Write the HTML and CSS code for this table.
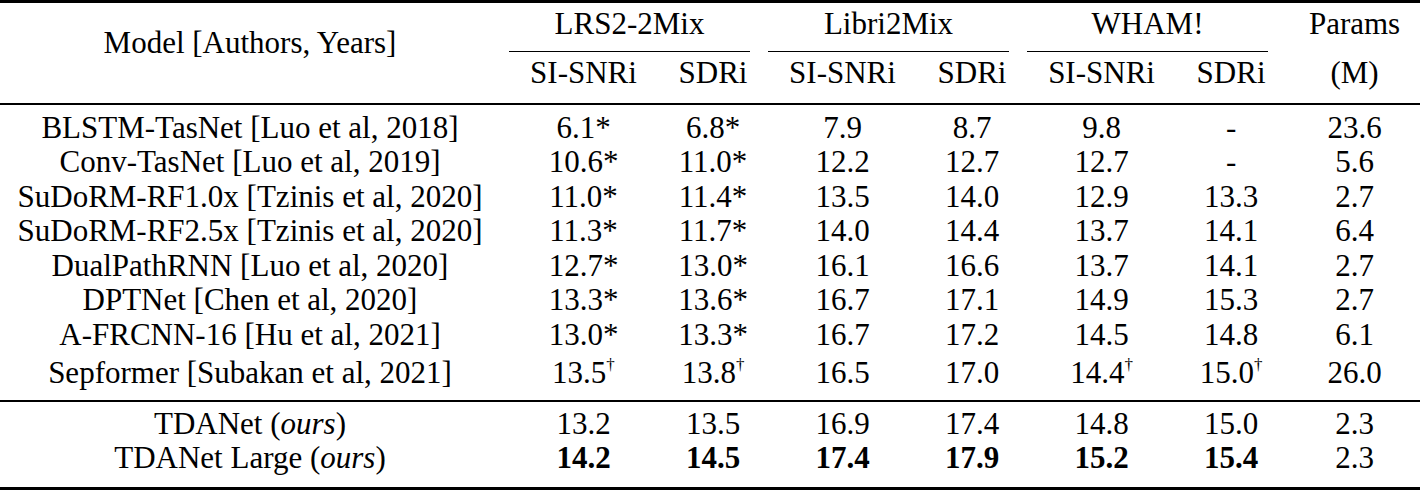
FILE: index.html
```html
<!DOCTYPE html>
<html>
<head>
	<title>Separation results</title>
	<link rel="stylesheet" href="styles.css">
</head>
<body>
	<table class="results">
		<colgroup>
			<col class="col-model">
			<col class="col-wide"><col class="col-narrow">
			<col class="col-wide"><col class="col-narrow">
			<col class="col-wide"><col class="col-narrow">
			<col class="col-params">
		</colgroup>
		<thead>
			<tr class="top">
				<th rowspan="2" class="model">Model [Authors, Years]</th>
				<th colspan="2" class="group"><div class="cmid">LRS2-2Mix</div></th>
				<th colspan="2" class="group"><div class="cmid">Libri2Mix</div></th>
				<th colspan="2" class="group"><div class="cmid">WHAM!</div></th>
				<th class="params">Params</th>
			</tr>
			<tr class="sub">
				<th>SI-SNRi</th>
				<th>SDRi</th>
				<th>SI-SNRi</th>
				<th>SDRi</th>
				<th>SI-SNRi</th>
				<th>SDRi</th>
				<th class="params">(M)</th>
			</tr>
		</thead>
		<tbody class="baselines">
			<tr>
				<td>BLSTM-TasNet [Luo et al, 2018]</td>
				<td>6.1*</td><td>6.8*</td><td>7.9</td><td>8.7</td><td>9.8</td><td>-</td><td class="params">23.6</td>
			</tr>
			<tr>
				<td>Conv-TasNet [Luo et al, 2019]</td>
				<td>10.6*</td><td>11.0*</td><td>12.2</td><td>12.7</td><td>12.7</td><td>-</td><td class="params">5.6</td>
			</tr>
			<tr>
				<td>SuDoRM-RF1.0x [Tzinis et al, 2020]</td>
				<td>11.0*</td><td>11.4*</td><td>13.5</td><td>14.0</td><td>12.9</td><td>13.3</td><td class="params">2.7</td>
			</tr>
			<tr>
				<td>SuDoRM-RF2.5x [Tzinis et al, 2020]</td>
				<td>11.3*</td><td>11.7*</td><td>14.0</td><td>14.4</td><td>13.7</td><td>14.1</td><td class="params">6.4</td>
			</tr>
			<tr>
				<td>DualPathRNN [Luo et al, 2020]</td>
				<td>12.7*</td><td>13.0*</td><td>16.1</td><td>16.6</td><td>13.7</td><td>14.1</td><td class="params">2.7</td>
			</tr>
			<tr>
				<td>DPTNet [Chen et al, 2020]</td>
				<td>13.3*</td><td>13.6*</td><td>16.7</td><td>17.1</td><td>14.9</td><td>15.3</td><td class="params">2.7</td>
			</tr>
			<tr>
				<td>A-FRCNN-16 [Hu et al, 2021]</td>
				<td>13.0*</td><td>13.3*</td><td>16.7</td><td>17.2</td><td>14.5</td><td>14.8</td><td class="params">6.1</td>
			</tr>
			<tr class="dagger">
				<td>Sepformer [Subakan et al, 2021]</td>
				<td>13.5<sup>&dagger;</sup></td><td>13.8<sup>&dagger;</sup></td><td>16.5</td><td>17.0</td><td>14.4<sup>&dagger;</sup></td><td>15.0<sup>&dagger;</sup></td><td class="params">26.0</td>
			</tr>
		</tbody>
		<tbody class="ours">
			<tr>
				<td>TDANet (<em>ours</em>)</td>
				<td>13.2</td><td>13.5</td><td>16.9</td><td>17.4</td><td>14.8</td><td>15.0</td><td class="params">2.3</td>
			</tr>
			<tr>
				<td>TDANet Large (<em>ours</em>)</td>
				<td><b>14.2</b></td><td><b>14.5</b></td><td><b>17.4</b></td><td><b>17.9</b></td><td><b>15.2</b></td><td><b>15.4</b></td><td class="params">2.3</td>
			</tr>
		</tbody>
	</table>
</body>
</html>
```

FILE: styles.css
```css
body {
	margin: 0;
	background: #fff;
	font-family: "Liberation Serif", serif;
}
.results {
	width: 1420px;
	table-layout: fixed;
	border-collapse: separate;
	border-spacing: 0;
	border-top: 3px solid #000;
	border-bottom: 3px solid #000;
	font-family: "Liberation Serif", serif;
	font-size: 31px;
	color: #000;
}
.col-model {
	width: 500px;
}
.col-wide {
	width: 167px;
}
.col-narrow {
	width: 92px;
}
.col-params {
	width: 143px;
}
.results th,
.results td {
	padding: 0;
	text-align: center;
	font-weight: normal;
	white-space: nowrap;
	font-family: "Liberation Serif", serif;
}
.results thead th {
	line-height: 34px;
	vertical-align: top;
}
.top th {
	padding-top: 3.5px;
}
.top .group {
	padding: 3.5px 9px 0;
}
.cmid {
	padding-bottom: 10.5px;
	border-bottom: 1px solid #000;
}
.top .model {
	padding-top: 22.5px;
	border-bottom: 2px solid #000;
}
.sub th {
	padding: 3.5px 0 13.5px;
	border-bottom: 2px solid #000;
}
.results .params {
	padding-left: 12px;
}
.baselines td {
	line-height: 34.5px;
}
.baselines tr:first-child td {
	padding-top: 5.5px;
}
.baselines .dagger td {
	padding-top: 3.5px;
	padding-bottom: 10px;
}
sup {
	font-size: 55%;
	line-height: 0;
	vertical-align: 0.75em;
}
.ours td {
	line-height: 34.4px;
}
.ours tr:first-child td {
	padding-top: 5px;
	border-top: 2px solid #000;
}
.ours tr:last-child td {
	padding-bottom: 11.2px;
}
.results b {
	font-weight: bold;
}
```
